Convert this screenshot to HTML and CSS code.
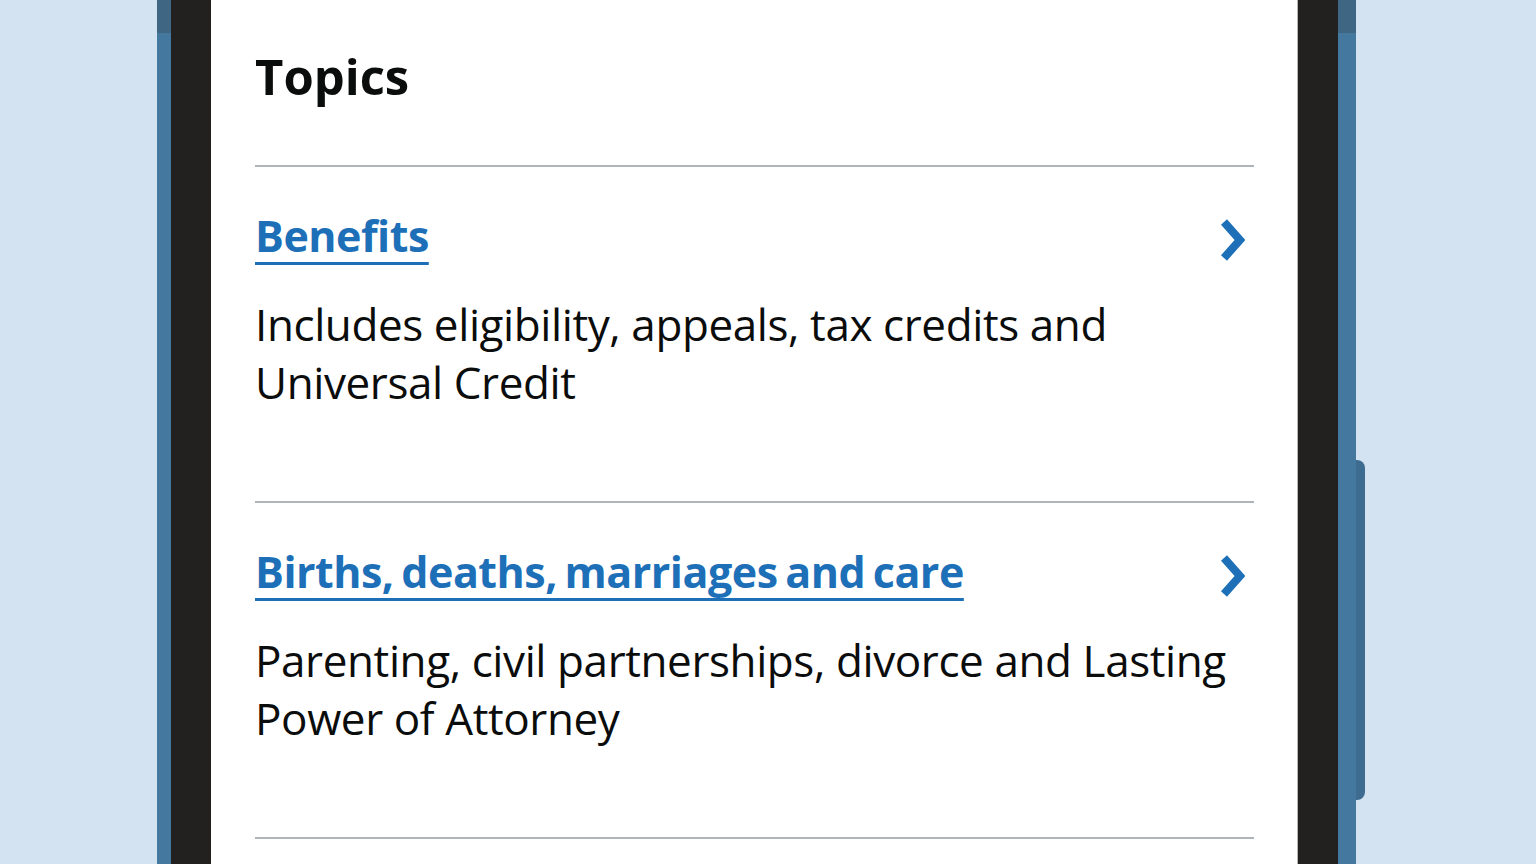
FILE: index.html
```html
<!DOCTYPE html>
<html lang="en">

<head>
  <link rel="stylesheet" href="styles.css">
</head>

<body>
  <div class="phone">
    <div class="bezel">
      <div class="screen">
        <h1>Topics</h1>

        <div class="topic">
          <div class="topic-head">
            <a href="#" class="topic-link">Benefits</a>
            <svg class="chevron" width="30" height="44" viewBox="0 0 30 44" aria-hidden="true">
              <path d="M6 4 L22 22 L6 40" fill="none" stroke="#1d70b8" stroke-width="8" stroke-linejoin="miter" />
            </svg>
          </div>
          <p class="desc">Includes eligibility, appeals, tax credits and Universal Credit</p>
        </div>

        <div class="topic">
          <div class="topic-head">
            <a href="#" class="topic-link">Births, deaths, marriages and care</a>
            <svg class="chevron" width="30" height="44" viewBox="0 0 30 44" aria-hidden="true">
              <path d="M6 4 L22 22 L6 40" fill="none" stroke="#1d70b8" stroke-width="8" stroke-linejoin="miter" />
            </svg>
          </div>
          <p class="desc">Parenting, civil partnerships, divorce and Lasting Power of Attorney</p>
        </div>

        <div class="topic"></div>
      </div>
    </div>
    <div class="side-button"></div>
  </div>
</body>

</html>
```

FILE: styles.css
```css
* {
  box-sizing: border-box;
}

body {
  margin: 0;
  background-color: #d4e3f2;
  font-family: 'Open Sans', sans-serif;
  height: 864px;
  overflow: hidden;
}

.phone {
  position: relative;
  margin-left: 157px;
  width: 1199px;
  height: 864px;
  background-color: #44789f;
  padding: 0 18px 0 14px;
}

.phone::before,
.phone::after {
  content: '';
  position: absolute;
  top: 0;
  height: 33px;
  background-color: #3f6784;
}

.phone::before {
  left: 0;
  width: 14px;
}

.phone::after {
  right: 0;
  width: 18px;
}

.side-button {
  position: absolute;
  right: -9px;
  top: 460px;
  width: 9px;
  height: 340px;
  background-color: #3e6b90;
  border-radius: 0 8px 8px 0;
}

.bezel {
  height: 100%;
  background-color: #232120;
  padding: 0 40px;
}

.screen {
  height: 100%;
  overflow: hidden;
  background-color: #fff;
  padding: 46px 43px 0 44px;
  border-right: 1px solid #b5b5b5;
}

h1 {
  color: #0b0c0c;
  font-size: 49px;
  line-height: 60px;
  font-weight: 700;
  margin: 0 0 59px;
}

.topic {
  border-top: 2px solid #b1b4b6;
  padding: 41px 0 90px;
}

.topic-head {
  display: flex;
  justify-content: space-between;
  align-items: center;
}

.topic-link {
  color: #1d70b8;
  font-size: 43px;
  line-height: 56px;
  font-weight: 700;
  letter-spacing: -0.5px;
  word-spacing: -3px;
  text-decoration: underline;
  text-decoration-thickness: 3px;
  text-underline-offset: 10px;
}

.chevron {
  margin: 8px 6px 0 0;
}

.desc {
  color: #0b0c0c;
  font-size: 44px;
  line-height: 58px;
  letter-spacing: -0.4px;
  margin: 31px 0 0;
}
```
